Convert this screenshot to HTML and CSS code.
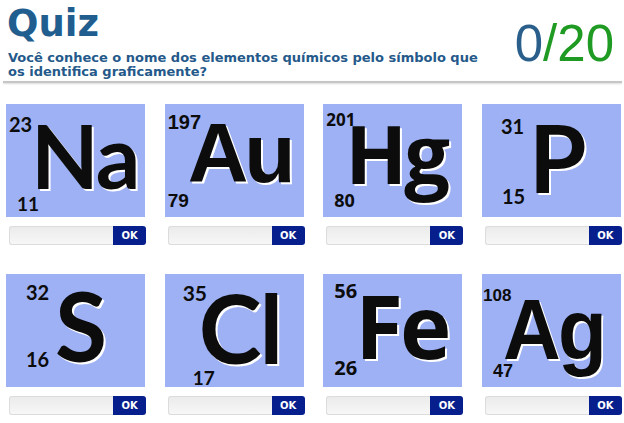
FILE: index.html
```html
<!DOCTYPE html>
<html lang="pt">
<head>
<meta charset="utf-8">
<title>Quiz</title>
<link rel="stylesheet" href="styles.css">
</head>
<body>
<header class="head">
  <div class="intro">
    <h1 class="title">Quiz</h1>
    <p class="sub">Você conhece o nome dos elementos químicos pelo símbolo que os identifica graficamente?</p>
  </div>
  <div class="score"><span class="got">0</span><span class="tot">/20</span></div>
</header>
<div class="rule"></div>
<main class="grid">
  <div class="cell">
    <div class="tile na"><span class="m">23</span><span class="z">11</span><span class="s">Na</span></div>
    <div class="ans"><span class="field"></span><span class="ok">OK</span></div>
  </div>
  <div class="cell">
    <div class="tile au"><span class="m">197</span><span class="z">79</span><span class="s">Au</span></div>
    <div class="ans"><span class="field"></span><span class="ok">OK</span></div>
  </div>
  <div class="cell">
    <div class="tile hg"><span class="m">201</span><span class="z">80</span><span class="s">Hg</span></div>
    <div class="ans"><span class="field"></span><span class="ok">OK</span></div>
  </div>
  <div class="cell">
    <div class="tile p"><span class="m">31</span><span class="z">15</span><span class="s">P</span></div>
    <div class="ans"><span class="field"></span><span class="ok">OK</span></div>
  </div>
  <div class="cell">
    <div class="tile su"><span class="m">32</span><span class="z">16</span><span class="s">S</span></div>
    <div class="ans"><span class="field"></span><span class="ok">OK</span></div>
  </div>
  <div class="cell">
    <div class="tile cl"><span class="m">35</span><span class="z">17</span><span class="s">Cl</span></div>
    <div class="ans"><span class="field"></span><span class="ok">OK</span></div>
  </div>
  <div class="cell">
    <div class="tile fe"><span class="m">56</span><span class="z">26</span><span class="s">Fe</span></div>
    <div class="ans"><span class="field"></span><span class="ok">OK</span></div>
  </div>
  <div class="cell">
    <div class="tile ag"><span class="m">108</span><span class="z">47</span><span class="s">Ag</span></div>
    <div class="ans"><span class="field"></span><span class="ok">OK</span></div>
  </div>
</main>
</body>
</html>
```
FILE: styles.css
```css
html, body { margin: 0; padding: 0; background: #fff; }
body { width: 624px; height: 423px; overflow: hidden; font-family: "Liberation Sans", Arial, sans-serif; }

.head { display: flex; justify-content: space-between; align-items: flex-start; padding: 6px 10px 0 7px; }
.title { margin: 0; font-family: "DejaVu Sans", Verdana, sans-serif; font-size: 37px; line-height: 36px; font-weight: bold; color: #1f5e8e; }
.sub { margin: 9px 0 0 1px; width: 475px; font-family: "DejaVu Sans", Verdana, sans-serif; font-size: 13px; line-height: 14px; font-weight: bold; color: #24598a; }
.score { margin-top: 12px; font-size: 51px; line-height: 51px; }
.got { color: #2a5f8c; }
.tot { color: #1f9a22; }

.rule { margin: 2px 2px 0 3px; height: 0; border-top: 2px solid #c6c6c6; box-shadow: 0 1px 2px rgba(0,0,0,0.15); }

.grid { display: grid; grid-template-columns: repeat(4, 139px); justify-content: space-between; row-gap: 29px; width: 615px; margin: 21px 0 0 6px; }
.cell { display: flex; flex-direction: column; }

.tile { display: grid; width: 139px; height: 113px; background: #9eb1f5; color: #0c0c0c; }
.tile > span { grid-area: 1 / 1; justify-self: start; align-self: start; line-height: 0.8; font-weight: bold; }
.tile .s { text-shadow: 2px 2px 0 #fff; }

.ans { display: flex; margin: 9px 0 0 3px; width: 137px; height: 19px; }
.field { flex: 1; box-sizing: border-box; border: 1px solid #dcdcdc; border-right: 0; border-radius: 3px 0 0 3px; background: linear-gradient(#ebebeb, #f7f7f7); }
.ok { width: 33px; background: #071f8c; border-radius: 0 3px 3px 0; color: #fff; font-family: "DejaVu Sans", Verdana, sans-serif; font-weight: bold; font-size: 10px; line-height: 19px; text-align: center; }

/* Na */
.na .s { font-family: Lato, sans-serif; font-size: 88px; margin: 16px 0 0 25px; letter-spacing: -2px; }
.na .m { font-family: Lato, sans-serif; font-size: 20px; margin: 12px 0 0 3px; }
.na .z { font-family: Lato, sans-serif; font-size: 19px; margin: 92px 0 0 11px; }
/* Au */
.au .s { font-family: "Liberation Sans", sans-serif; font-size: 84px; margin: 16px 0 0 23px; letter-spacing: -4px; }
.au .m { font-size: 20px; margin: 10px 0 0 3px; }
.au .z { font-size: 19px; margin: 89px 0 0 3px; }
/* Hg */
.hg .s { font-family: "Open Sans", sans-serif; font-size: 81px; margin: 17px 0 0 22px; letter-spacing: -3px; }
.hg .m { font-family: "Open Sans", sans-serif; font-size: 17px; margin: 9px 0 0 3px; }
.hg .z { font-family: "Open Sans", sans-serif; font-size: 18px; margin: 89px 0 0 11px; }
/* P */
.p .s { font-family: Lato, sans-serif; font-size: 93px; margin: 16px 0 0 47px; }
.p .m { font-family: Lato, sans-serif; font-size: 20px; margin: 14px 0 0 19px; }
.p .z { font-family: Lato, sans-serif; font-size: 20px; margin: 84px 0 0 20px; }
/* S */
.su .s { font-family: Lato, sans-serif; font-size: 95px; margin: 13px 0 0 49px; }
.su .m { font-family: Lato, sans-serif; font-size: 20px; margin: 10px 0 0 20px; }
.su .z { font-family: Lato, sans-serif; font-size: 20px; margin: 77px 0 0 20px; }
/* Cl */
.cl .s { font-family: Lato, sans-serif; font-size: 95px; margin: 15px 0 0 34px; letter-spacing: -2px; }
.cl .m { font-family: Lato, sans-serif; font-size: 21px; margin: 11px 0 0 18px; }
.cl .z { font-family: Lato, sans-serif; font-size: 19px; margin: 96px 0 0 28px; }
/* Fe */
.fe .s { font-family: "Open Sans", sans-serif; font-size: 87px; margin: 17px 0 0 32px; letter-spacing: -3px; }
.fe .m { font-family: "Open Sans", sans-serif; font-size: 20px; margin: 9px 0 0 11px; }
.fe .z { font-family: "Open Sans", sans-serif; font-size: 20px; margin: 86px 0 0 11px; }
/* Ag */
.ag .s { font-family: "Liberation Sans", sans-serif; font-size: 86px; margin: 21px 0 0 21px; letter-spacing: -3px; transform: scaleX(0.93); transform-origin: left top; }
.ag .m { font-size: 17px; margin: 15px 0 0 1px; }
.ag .z { font-size: 18px; margin: 90px 0 0 11px; }
```
